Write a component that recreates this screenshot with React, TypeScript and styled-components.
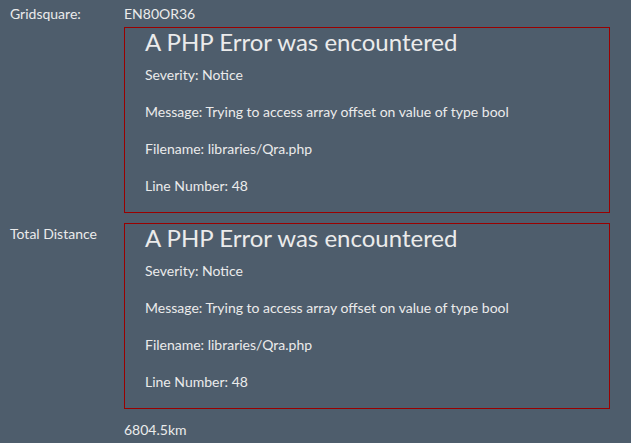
import styled, { createGlobalStyle } from "styled-components";

const GlobalStyle = createGlobalStyle`
  html, body {
    margin: 0;
    padding: 0;
    background-color: #4e5d6c;
  }
  body {
    font-family: Lato, "Open Sans", sans-serif;
    font-size: 14px;
    line-height: 1.5;
    color: #ebebeb;
  }
`;

const errors = [
  "Severity: Notice",
  "Message: Trying to access array offset on value of type bool",
  "Filename: libraries/Qra.php",
  "Line Number: 48",
];

const PhpError = ({ $offset = 0 }: { $offset?: number }) => {
  return (
    <ErrorBox $offset={$offset}>
      <ErrorTitle>A PHP Error was encountered</ErrorTitle>
      {errors.map((line) => (
        <ErrorLine key={line}>{line}</ErrorLine>
      ))}
    </ErrorBox>
  );
};

const App = () => {
  return (
    <>
      <GlobalStyle />
      <Page>
        <Row>
          <Label>Gridsquare:</Label>
          <Value>
            <span>EN80OR36</span>
            <PhpError $offset={3} />
          </Value>
        </Row>
        <Row>
          <Label>Total Distance</Label>
          <Value>
            <PhpError />
            <span>6804.5km</span>
          </Value>
        </Row>
      </Page>
    </>
  );
};

const Page = styled.div`
  padding: 3px 21px 0 10px;
  display: flex;
  flex-direction: column;
`;

const Row = styled.div`
  display: grid;
  grid-template-columns: 114px 1fr;
`;

const Label = styled.div`
  white-space: nowrap;
`;

const Value = styled.div`
  display: flex;
  flex-direction: column;
  align-items: flex-start;
`;

const ErrorBox = styled.div<{ $offset: number }>`
  align-self: stretch;
  border: 1px solid #990000;
  padding-left: 20px;
  margin: ${(p) => p.$offset}px 0 10px 0;
`;

const ErrorTitle = styled.h4`
  font-size: 24px;
  font-weight: 400;
  line-height: 28px;
  margin: 0 0 8px 0;
`;

const ErrorLine = styled.p`
  margin: 0 0 16px 0;
`;

export default App;
